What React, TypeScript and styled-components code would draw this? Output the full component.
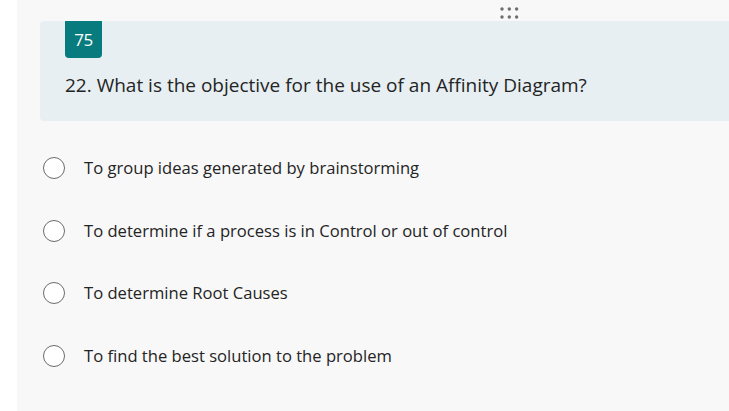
import React from 'react';
import styled, { createGlobalStyle } from 'styled-components';

const GlobalStyle = createGlobalStyle`
  html, body {
    margin: 0;
    padding: 0;
    background: #ffffff;
    overflow: hidden;
  }
  body {
    font-family: "Open Sans", "Noto Sans", sans-serif;
    color: #242424;
  }
`;

const Page = styled.div`
  width: 729px;
  height: 411px;
  overflow: hidden;
  padding-left: 17px;
  box-sizing: border-box;
`;

const Card = styled.section`
  width: 984px;
  min-height: 411px;
  background: #f8f8f8;
  padding: 0 23px;
  box-sizing: border-box;
`;

const DragHandle = styled.div`
  height: 21px;
  display: flex;
  justify-content: center;
  align-items: flex-start;
  padding-top: 7px;
  box-sizing: border-box;
`;

const Header = styled.div`
  background: #e7eff2;
  border-radius: 4px;
  padding: 0 25px 24px;
`;

const Badge = styled.div`
  width: 37px;
  height: 37px;
  background: #077b7d;
  color: #ffffff;
  border-radius: 0 0 4px 4px;
  display: flex;
  align-items: center;
  justify-content: center;
  font-size: 17px;
  letter-spacing: -0.5px;
`;

const Title = styled.h2`
  margin: 15px 0 0;
  font-weight: 400;
  font-size: 19px;
  line-height: 24px;
  color: #242424;
`;

const Options = styled.div`
  display: flex;
  flex-direction: column;
  padding: 15.7px 0 0 3px;
`;

const Option = styled.label`
  height: 62.67px;
  display: flex;
  align-items: center;
  gap: 19px;
  cursor: pointer;
`;

const Radio = styled.span`
  width: 20px;
  height: 20px;
  border-radius: 50%;
  border: 1.5px solid #6b6b6b;
  background: #ffffff;
  flex-shrink: 0;
`;

const OptionText = styled.span`
  font-size: 16.6px;
  line-height: 22px;
  color: #242424;
`;

const options = [
  'To group ideas generated by brainstorming',
  'To determine if a process is in Control or out of control',
  'To determine Root Causes',
  'To find the best solution to the problem',
];

function Dots() {
  const xs = [2, 9.3, 16.6];
  const ys = [2, 10];
  return (
    <svg width="19" height="12" viewBox="0 0 19 12">
      {ys.map((y) =>
        xs.map((x) => <circle key={`${x}-${y}`} cx={x} cy={y} r="1.7" fill="#6e6e6e" />)
      )}
    </svg>
  );
}

export default function App() {
  return (
    <Page>
      <GlobalStyle />
      <Card>
        <DragHandle>
          <Dots />
        </DragHandle>
        <Header>
          <Badge>75</Badge>
          <Title>22. What is the objective for the use of an Affinity Diagram?</Title>
        </Header>
        <Options>
          {options.map((o) => (
            <Option key={o}>
              <Radio />
              <OptionText>{o}</OptionText>
            </Option>
          ))}
        </Options>
      </Card>
    </Page>
  );
}
